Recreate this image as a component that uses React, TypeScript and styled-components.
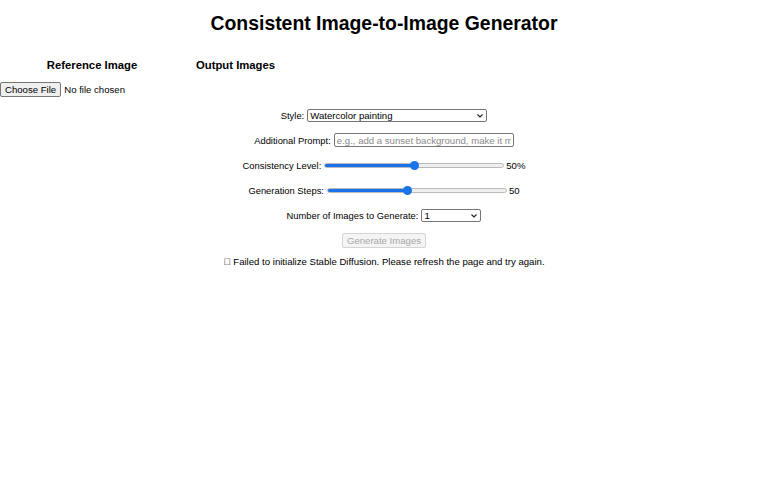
import React, { useState } from "react";
import styled, { createGlobalStyle } from "styled-components";

const Global = createGlobalStyle`
  html, body { margin: 0; padding: 0; background: #ffffff; }
  body { font-family: "Liberation Sans", Arial, sans-serif; color: #000; }
`;

const Page = styled.div`
  display: flex;
  flex-direction: column;
  width: 768px;
`;

const Title = styled.h1`
  margin: 0;
  padding-top: 12px;
  font-size: 19.4px;
  line-height: 22px;
  font-weight: bold;
  text-align: center;
`;

const Columns = styled.div`
  display: grid;
  grid-template-columns: 184px 1fr;
  column-gap: 12px;
  margin-top: 25px;
`;

const Column = styled.div`
  display: flex;
  flex-direction: column;
  align-items: flex-start;
`;

const SectionHeading = styled.h3<{ $center?: boolean }>`
  margin: 0;
  font-size: 11.3px;
  line-height: 13px;
  font-weight: bold;
  align-self: stretch;
  text-align: ${(p) => (p.$center ? "center" : "left")};
`;

const FileInput = styled.input`
  margin-top: 10px;
  font-family: "Liberation Sans", Arial, sans-serif;
  font-size: 9.6px;
  padding: 0;
  height: 15px;
  &::file-selector-button {
    font-family: "Liberation Sans", Arial, sans-serif;
    font-size: 9.6px;
    height: 15px;
    padding: 0 4px;
    margin-right: 3px;
    border: 1px solid #767676;
    border-radius: 2px;
    background: #efefef;
    color: #000;
  }
`;

const Controls = styled.div`
  display: flex;
  flex-direction: column;
  align-items: center;
  margin-top: 11px;
`;

const Row = styled.div`
  display: flex;
  align-items: center;
  justify-content: center;
  height: 14px;
  margin-bottom: 11px;
  font-size: 9.4px;
`;

const Label = styled.label`
  font-size: 9.4px;
  margin-right: 3px;
  white-space: nowrap;
`;

const SelectWrap = styled.span`
  position: relative;
  display: inline-flex;
`;

const Select = styled.select<{ $w: number }>`
  -webkit-appearance: none;
  appearance: none;
  width: ${(p) => p.$w}px;
  height: 13px;
  box-sizing: border-box;
  font-family: "Liberation Sans", Arial, sans-serif;
  font-size: 9.6px;
  line-height: 11px;
  padding: 0 0 0 2px;
  border: 1px solid #767676;
  border-radius: 2px;
  background: #fff;
  color: #000;
`;

const Chevron = styled.svg`
  position: absolute;
  right: 4px;
  top: 5px;
  width: 6px;
  height: 4px;
  pointer-events: none;
`;

const TextInput = styled.input`
  width: 180px;
  height: 14px;
  box-sizing: border-box;
  font-family: "Liberation Sans", Arial, sans-serif;
  font-size: 9.6px;
  padding: 0 2px;
  border: 1px solid #767676;
  border-radius: 2px;
  &::placeholder { color: #8a8a8a; }
`;

const Range = styled.input`
  -webkit-appearance: none;
  appearance: none;
  width: 180px;
  height: 10px;
  margin: 0 2px 0 0;
  background: transparent;
  &::-webkit-slider-runnable-track {
    height: 5px;
    border-radius: 3px;
    border: 1px solid #b9b9b9;
    box-sizing: border-box;
    background: linear-gradient(
      to right,
      #1a73e8 0,
      #1a73e8 var(--fill),
      #efefef var(--fill),
      #efefef 100%
    );
  }
  &::-webkit-slider-thumb {
    -webkit-appearance: none;
    width: 9px;
    height: 9px;
    margin-top: -3px;
    border-radius: 50%;
    background: #1a73e8;
    border: none;
  }
`;

const Value = styled.span`
  font-size: 9.6px;
`;

const GenerateButton = styled.button`
  font-family: "Liberation Sans", Arial, sans-serif;
  font-size: 9.6px;
  height: 15px;
  padding: 0 4px;
  border: 1px solid #d4d4d4;
  border-radius: 2px;
  background: #f4f4f4;
  color: #a8a8a8;
`;

const ErrorText = styled.p`
  margin: -2px 0 0;
  font-size: 9.6px;
  line-height: 12px;
  text-align: center;
`;

const RangeField: React.FC<{ min: number; max: number; value: number; suffix?: string }> = ({ min, max, value, suffix = "" }) => {
  const [v, setV] = useState(value);
  const pct = (v - min) / (max - min);
  const fill = `calc(4.5px + ${pct} * (100% - 9px))`;
  return (
    <>
      <Range
        type="range"
        min={min}
        max={max}
        value={v}
        onChange={(e) => setV(Number(e.target.value))}
        style={{ ["--fill" as any]: fill }}
      />
      <Value>{v}{suffix}</Value>
    </>
  );
};

const DropDown: React.FC<{ width: number; defaultValue: string; options: [string, string][] }> = ({ width, defaultValue, options }) => (
  <SelectWrap>
    <Select $w={width} defaultValue={defaultValue}>
      {options.map(([v, t]) => (
        <option key={v} value={v}>{t}</option>
      ))}
    </Select>
    <Chevron viewBox="0 0 6 4">
      <path d="M0.5 0.5 L3 3 L5.5 0.5" fill="none" stroke="#222" strokeWidth="1.1" />
    </Chevron>
  </SelectWrap>
);

export default function App() {
  return (
    <Page>
      <Global />
      <Title>Consistent Image-to-Image Generator</Title>
      <Columns>
        <Column>
          <SectionHeading $center>Reference Image</SectionHeading>
          <FileInput type="file" accept="image/*" />
        </Column>
        <Column>
          <SectionHeading>Output Images</SectionHeading>
        </Column>
      </Columns>
      <Controls>
        <Row>
          <Label>Style:</Label>
          <DropDown
            width={180}
            defaultValue="watercolor"
            options={[["watercolor", "Watercolor painting"], ["oil", "Oil painting"], ["anime", "Anime"]]}
          />
        </Row>
        <Row>
          <Label>Additional Prompt:</Label>
          <TextInput type="text" placeholder="e.g., add a sunset background, make it more vibrant" />
        </Row>
        <Row>
          <Label>Consistency Level:</Label>
          <RangeField min={0} max={100} value={50} suffix="%" />
        </Row>
        <Row>
          <Label>Generation Steps:</Label>
          <RangeField min={10} max={100} value={50} />
        </Row>
        <Row>
          <Label>Number of Images to Generate:</Label>
          <DropDown width={60} defaultValue="1" options={[["1", "1"], ["2", "2"], ["3", "3"], ["4", "4"]]} />
        </Row>
        <Row>
          <GenerateButton disabled>Generate Images</GenerateButton>
        </Row>
        <ErrorText>{"\uE000"} Failed to initialize Stable Diffusion. Please refresh the page and try again.</ErrorText>
      </Controls>
    </Page>
  );
}
